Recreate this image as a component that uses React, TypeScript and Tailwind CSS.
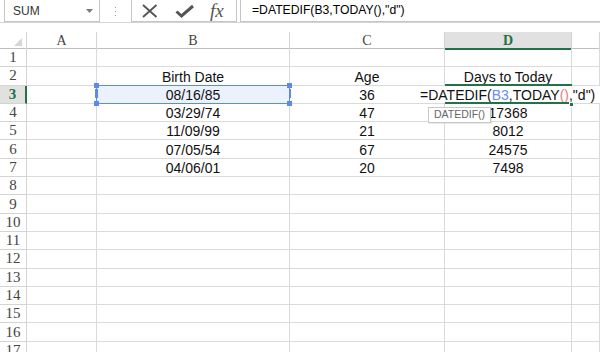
import React from 'react';

const cols = 'grid grid-cols-[27px_70px_193px_155px_127px_1fr]';

const rows: string[][] = [
  ['', '', '', ''],
  ['', 'Birth Date', 'Age', 'Days to Today'],
  ['', '', '36', ''],
  ['', '03/29/74', '47', '17368'],
  ['', '11/09/99', '21', '8012'],
  ['', '07/05/54', '67', '24575'],
  ['', '04/06/01', '20', '7498'],
];

const letters = ['A', 'B', 'C', 'D', ''];

function FormulaBar() {
  return (
    <div className="flex h-[23px] border-b border-[#d4d4d4]">
      <div className="ml-[4px] flex w-[96px] items-center justify-between border-x border-b border-[#c6c6c6] pl-[8px] pr-[6px] text-[12px] text-[#333]">
        <span>SUM</span>
        <svg width="7" height="4" viewBox="0 0 7 4">
          <polygon points="0,0 7,0 3.5,4" fill="#7a7a7a" />
        </svg>
      </div>
      <div className="flex w-[31px] flex-col items-center justify-center gap-[3px]">
        {[0, 1, 2].map((i) => (
          <span key={i} className="block h-[1px] w-[1px] bg-[#9a9a9a]" />
        ))}
      </div>
      <div className="flex w-[106px] items-center border-x border-b border-[#c6c6c6] pl-[9px]">
        <svg width="18" height="14" viewBox="0 0 18 14" className="mr-[16px]">
          <path d="M2 1 L15.5 13 M15.5 1 L2 13" stroke="#555" strokeWidth="1.9" fill="none" />
        </svg>
        <svg width="20" height="14" viewBox="0 0 20 14" className="mr-[15px]">
          <path d="M1.5 7.5 L6.5 12 L18 2" stroke="#555" strokeWidth="3" fill="none" />
        </svg>
        <span className="font-['Liberation_Serif',serif] text-[19px] italic leading-none text-[#555]">fx</span>
      </div>
      <div className="ml-[3px] flex flex-1 items-center border-l border-b border-[#c6c6c6] pl-[11px] text-[12.2px] text-black">
        =DATEDIF(B3,TODAY(),"d")
      </div>
    </div>
  );
}

function HeaderRow() {
  return (
    <div className={`${cols} h-[17px] grid-rows-[17px] border-b border-[#bfbfbf] font-['Liberation_Serif',serif] text-[14px] leading-none`}>
      <div className="relative border-r border-[#d4d4d4]">
        <svg width="8" height="8" viewBox="0 0 8 8" className="absolute bottom-[3px] right-[4px]">
          <polygon points="8,0 8,8 0,8" fill="#d6d6d6" />
        </svg>
      </div>
      {letters.map((l, i) => (
        <div
          key={i}
          className={
            l === 'D'
              ? 'relative flex items-center justify-center border-r border-[#d4d4d4] bg-[#e1e1e1] pt-[1px] font-bold text-[#217346]'
              : 'flex items-center justify-center border-r border-[#d4d4d4] pt-[1px] text-[#444]'
          }
        >
          {l}
          {l === 'D' && <span className="absolute -bottom-[1px] left-0 right-0 h-[2px] bg-[#217346]" />}
        </div>
      ))}
    </div>
  );
}

function SheetRow({ n, cells }: { n: number; cells: string[] }) {
  const active = n === 3;
  return (
    <div className={`${cols} h-[18.3px] grid-rows-[18.3px]`}>
      <div
        className={
          active
            ? 'flex items-center justify-center border-b border-r-2 border-b-[#d4d4d4] border-r-[#217346] bg-[#e1e1e1] font-["Liberation_Serif",serif] text-[15px] font-bold leading-none text-[#217346]'
            : 'flex items-center justify-center border-b border-r border-[#d4d4d4] font-["Liberation_Serif",serif] text-[15px] leading-none text-[#444]'
        }
      >
        {n}
      </div>
      {[0, 1, 2, 3, 4].map((c) => (
        <div
          key={c}
          className="flex items-end justify-center overflow-hidden border-b border-r border-[#dadada] text-[14px] leading-[16px] text-[#111]"
        >
          {cells[c] ?? ''}
        </div>
      ))}
    </div>
  );
}

export default function App() {
  const all = Array.from({ length: 17 }, (_, i) => rows[i] ?? ['', '', '', '']);
  return (
    <div className="relative h-[352px] w-[600px] overflow-hidden bg-white font-['Liberation_Sans',Arial,sans-serif]">
      <FormulaBar />
      <div className="h-[9px]" />
      <HeaderRow />
      {all.map((cells, i) => (
        <SheetRow key={i} n={i + 1} cells={cells} />
      ))}

      {/* B3 selection */}
      <div className="absolute left-[96px] top-[85px] flex h-[18.5px] w-[194px] items-end justify-center border-[1.5px] border-[#5d8ae6] bg-[#ebf1fd] text-[14px] leading-[16px] text-[#111]">
        08/16/85
        {['-left-[3px] -top-[3px]', '-right-[3px] -top-[3px]', '-left-[3px] -bottom-[3px]', '-right-[3px] -bottom-[3px]'].map((p) => (
          <span key={p} className={`absolute h-[5px] w-[5px] bg-[#5d8ae6] ${p}`} />
        ))}
        <span className="absolute -left-[2px] top-[3px] h-[9px] w-[2.5px] bg-[#5d8ae6]" />
        <span className="absolute -right-[2px] top-[3px] h-[9px] w-[2.5px] bg-[#5d8ae6]" />
      </div>

      {/* D3 in-cell editor */}
      <div className="absolute left-[418px] top-[86px] flex h-[17px] w-[182px] items-end bg-white pl-[2px] text-[14px] leading-[16px] text-[#111]">
        <span>=DATEDIF(</span>
        <span className="text-[#6b8ee8]">B3</span>
        <span>,TODAY</span>
        <span className="text-[#ea7b7b]">()</span>
        <span>,"d")</span>
      </div>
      <div className="absolute left-[445px] top-[84px] h-[2px] w-[127px] bg-[#217346]" />
      <div className="absolute left-[445px] top-[102px] h-[2px] w-[125px] bg-[#217346]" />
      <div className="absolute left-[569px] top-[102px] h-[5px] w-[5px] border border-white bg-[#217346]" />

      {/* function tooltip */}
      <div className="absolute left-[428px] top-[107px] flex h-[16px] w-[63px] items-center justify-center border border-[#c8c8c8] bg-white text-[10.5px] text-[#666] shadow-[1px_1px_1px_rgba(0,0,0,0.08)]">
        DATEDIF()
      </div>
    </div>
  );
}
